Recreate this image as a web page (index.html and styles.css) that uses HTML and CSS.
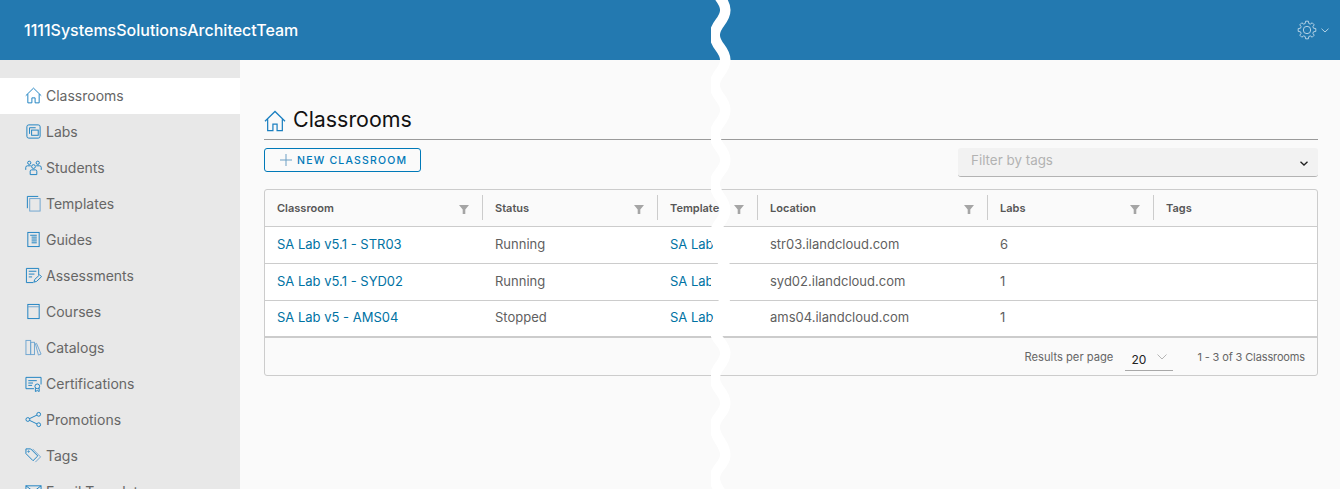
FILE: index.html
```html
<!DOCTYPE html>
<html lang="en">
<head>
<meta charset="utf-8">
<title>Classrooms</title>
<link rel="stylesheet" href="styles.css">
</head>
<body>
<header class="topbar">
  <span class="brand">1111SystemsSolutionsArchitectTeam</span>
  <div class="settings">
    <svg class="gear" viewBox="0 0 20 20" width="20" height="20"><path d="M8.6 1.2h2.8l.4 2.3 1.5.6 1.9-1.3 2 2-1.3 1.9.6 1.5 2.3.4v2.8l-2.3.4-.6 1.5 1.3 1.9-2 2-1.9-1.3-1.5.6-.4 2.3H8.6l-.4-2.3-1.5-.6-1.9 1.3-2-2 1.3-1.9-.6-1.5-2.3-.4V8.6l2.3-.4.6-1.5-1.3-1.9 2-2 1.9 1.3 1.5-.6z"/><circle cx="10" cy="10" r="3.7"/></svg>
    <svg class="caret" viewBox="0 0 8 5" width="8" height="5"><path d="M.5.7 4 4 7.5.7"/></svg>
  </div>
</header>
<div class="shell">
  <nav class="sidebar">
    <a class="nav-item active"><svg class="icon" viewBox="0 0 18 18"><path d="M.8 9.2 9 1.2l8.2 8M3 7.5v9.3h4.3v-5.3h3.4v5.3H15V7.5"/></svg>Classrooms</a>
    <a class="nav-item"><svg class="icon" viewBox="0 0 18 18"><rect x="2" y="2" width="14" height="14" rx="2"/><path d="M4.8 11.5V5h6.5"/><rect x="7" y="7.5" width="7" height="5.5"/></svg>Labs</a>
    <a class="nav-item"><svg class="icon" viewBox="0 0 18 18"><circle cx="9" cy="8" r="2"/><path d="M5.500 16.500v-3.500q0-1.500 1.500-1.500h4q1.500 0 1.500 1.500v3.500z"/><circle cx="4.500" cy="4" r="1.700"/><circle cx="13.500" cy="4" r="1.700"/><path d="M.8 11.500V9q0-1.800 1.800-1.800h3.600M17.200 11.500V9q0-1.800-1.800-1.800h-3.600"/></svg>Students</a>
    <a class="nav-item"><svg class="icon" viewBox="0 0 18 18"><path d="M2.500 14V1.500h11.500"/><rect class="soft" x="5" y="3.800" width="11" height="13.200"/></svg>Templates</a>
    <a class="nav-item"><svg class="icon" viewBox="0 0 18 18"><rect x="3" y="1.500" width="12" height="15"/><path d="M5.500 4.500h7M7 6.500h5.500M7 8.500h5.500M7 10.500h5.500M7 12.500h5.500"/></svg>Guides</a>
    <a class="nav-item"><svg class="icon" viewBox="0 0 18 18"><path d="M9 16.500H1.500v-15h13v7M4 4.500h8M4 7.500h6M4 10.500h3.500"/><path d="m9.500 16 .7-2.700 5.300-5 2 2-5.300 5z"/></svg>Assessments</a>
    <a class="nav-item"><svg class="icon" viewBox="0 0 18 18"><rect x="3" y="1.500" width="12" height="15"/><path class="soft" d="M3 4h12"/></svg>Courses</a>
    <a class="nav-item"><svg class="icon" viewBox="0 0 18 18"><rect class="soft" x="1" y="1.500" width="5" height="15"/><rect class="soft" x="6" y="3.500" width="4" height="13"/><path class="soft" d="m11 5 1.200-.4 4.800 11.400-2.800 1z"/></svg>Catalogs</a>
    <a class="nav-item"><svg class="icon" viewBox="0 0 18 18"><path d="M9.500 14.500H1v-12h16v7.500M3.500 6h9M3.500 8.500h5M3.500 11h4"/><circle cx="13" cy="12" r="2.500"/><path d="M11 14v3.500l2-1 2 1V14"/></svg>Certifications</a>
    <a class="nav-item"><svg class="icon" viewBox="0 0 18 18"><circle cx="3" cy="9" r="2"/><circle cx="14.500" cy="3.500" r="2"/><circle cx="14.500" cy="14.500" r="2"/><path d="M4.800 8.100l7.900-3.800M4.800 9.900l7.900 3.800"/></svg>Promotions</a>
    <a class="nav-item"><svg class="icon" viewBox="0 0 18 18"><path d="M1 2v5l7.500 7.500 5-5L6 2z"/><path class="soft" d="M8 2l8.500 8.500-5.500 5.500"/><circle cx="3.800" cy="4.800" r=".7"/></svg>Tags</a>
    <a class="nav-item"><svg class="icon" viewBox="0 0 18 18"><rect x="1" y="3" width="16" height="12"/><path d="m1 3 8 6 8-6"/></svg>Email Templates</a>
  </nav>
  <main class="content">
    <h1 class="page-title"><svg class="title-icon" viewBox="0 0 18 18"><path d="M.8 9.200 9 1.200l8.200 8M3 7.500v9.300h4.300v-5.300h3.400v5.300H15V7.500"/></svg>Classrooms</h1>
    <div class="toolbar">
      <button class="btn-new"><svg class="plus" viewBox="0 0 12 12" width="12" height="12"><path d="M6 0v12M0 6h12"/></svg>NEW CLASSROOM</button>
      <div class="tag-filter"><span>Filter by tags</span><svg class="filter-caret" viewBox="0 0 8 5" width="8" height="5"><path d="M.5.7 4 4 7.500.7"/></svg></div>
    </div>
    <section class="grid">
      <table>
        <colgroup><col class="c1"><col class="c2"><col class="c3"><col class="c4"><col class="c5"><col></colgroup>
        <thead>
          <tr>
            <th><span class="th-in">Classroom<svg class="funnel" viewBox="0 0 10 10"><path d="M0 1h10L6.300 5.500V10H3.700V5.500z"/></svg></span></th>
            <th><span class="th-in">Status<svg class="funnel" viewBox="0 0 10 10"><path d="M0 1h10L6.300 5.500V10H3.700V5.500z"/></svg></span></th>
            <th><span class="th-in">Template<svg class="funnel" viewBox="0 0 10 10"><path d="M0 1h10L6.300 5.500V10H3.700V5.500z"/></svg></span></th>
            <th><span class="th-in">Location<svg class="funnel" viewBox="0 0 10 10"><path d="M0 1h10L6.300 5.500V10H3.700V5.500z"/></svg></span></th>
            <th><span class="th-in">Labs<svg class="funnel" viewBox="0 0 10 10"><path d="M0 1h10L6.300 5.500V10H3.700V5.500z"/></svg></span></th>
            <th><span class="th-in">Tags</span></th>
          </tr>
        </thead>
        <tbody>
          <tr><td><a>SA Lab v5.1 - STR03</a></td><td>Running</td><td><a>SA Lab</a></td><td>str03.ilandcloud.com</td><td>6</td><td></td></tr>
          <tr><td><a>SA Lab v5.1 - SYD02</a></td><td>Running</td><td><a>SA Lab</a></td><td>syd02.ilandcloud.com</td><td>1</td><td></td></tr>
          <tr><td><a>SA Lab v5 - AMS04</a></td><td>Stopped</td><td><a>SA Lab</a></td><td>ams04.ilandcloud.com</td><td>1</td><td></td></tr>
        </tbody>
      </table>
      <footer class="grid-foot">
        <span class="per-page">Results per page</span>
        <span class="page-size"><span class="size-value">20</span><svg class="size-caret" viewBox="0 0 10 6" width="10" height="6"><path d="M.5.500 5 5 9.500.5"/></svg></span>
        <span class="count">1 - 3 of 3 Classrooms</span>
      </footer>
    </section>
  </main>
</div>
<svg class="tear" viewBox="0 0 24 489" width="24" height="489"><path d="M3.700-15C3.700-4 14.300-1 14.300 10C14.300 21 3.700 24 3.700 35C3.700 46 14.300 49 14.300 60C14.300 71 3.700 74 3.700 85C3.700 96 14.300 99 14.300 110C14.300 121 3.700 124 3.700 135C3.700 146 14.300 149 14.300 160C14.300 171 3.700 173 3.700 184C3.700 195 14.300 199 14.300 210C14.300 221 3.700 224 3.700 235C3.700 245 14.300 248 14.300 258C14.300 268 3.700 271 3.700 281C3.700 291 14.300 295 14.300 305C14.300 316 3.700 319 3.700 330C3.700 340 14.300 343 14.300 353C14.300 364 3.700 367 3.700 378C3.700 389 14.300 392 14.300 403C14.300 414 3.700 416 3.700 427C3.700 439 14.300 443 14.300 455C14.300 465 3.700 468 3.700 478C3.700 489 14.300 494 14.300 505"/></svg>
</body>
</html>
```
FILE: styles.css
```css
* { box-sizing: border-box; }
html, body { margin: 0; height: 100%; }
body {
  position: relative;
  height: 489px;
  overflow: hidden;
  font-family: "Inter", "Liberation Sans", sans-serif;
  background: #fafafa;
  color: #565656;
}
.topbar {
  height: 60px;
  background: #2379b0;
  display: flex;
  align-items: center;
  justify-content: space-between;
  padding: 0 11px 0 24px;
}
.brand { color: #fff; font-size: 16px; font-weight: 500; margin-top: -1px; }
.settings { display: flex; align-items: center; gap: 4px; }
.gear { fill: none; stroke: #b4d2e6; stroke-width: 1; }
.caret { fill: none; stroke: #b4d2e6; stroke-width: 1; }
.shell { display: flex; height: 429px; }
.sidebar {
  width: 240px;
  flex: none;
  background: #e8e8e8;
  padding-top: 18px;
  overflow: hidden;
}
.nav-item {
  display: flex;
  align-items: center;
  height: 36px;
  padding: 0 0 2px 25px;
  gap: 4px;
  font-size: 14px;
  color: #666;
}
.nav-item.active { background: #fff; }
.icon {
  width: 17px;
  height: 17px;
  flex: none;
  fill: none;
  stroke: #1a7fc0;
  stroke-width: 1;
}
.icon .soft { stroke: #6ea5d0; }
.content { flex: 1; min-width: 0; padding: 44px 22px 0 24px; }
.page-title {
  margin: 0;
  height: 36px;
  display: flex;
  align-items: center;
  gap: 7px;
  font-size: 21.400px;
  font-weight: 400;
  color: #111;
  border-bottom: 1px solid #9a9a9a;
  padding-bottom: 5px;
}
.title-icon {
  width: 22px;
  height: 22px;
  fill: none;
  stroke: #1a7fc0;
  stroke-width: 1;
  margin-top: 4px;
}
.toolbar {
  display: flex;
  align-items: flex-start;
  justify-content: space-between;
  margin-top: 8px;
}
.btn-new {
  width: 157px;
  height: 24px;
  display: flex;
  align-items: center;
  gap: 5px;
  padding: 0 0 0 15px;
  background: #fafafa;
  border: 1px solid #0079b8;
  border-radius: 3px;
  color: #0079b8;
  font: 500 10.500px "Inter", "Liberation Sans", sans-serif;
  letter-spacing: 1.200px;
}
.plus { fill: none; stroke: #6c9fc4; stroke-width: 1; }
.tag-filter {
  width: 360px;
  height: 29px;
  display: flex;
  align-items: center;
  justify-content: space-between;
  padding: 0 10px 0 13px;
  background: #f2f2f2;
  border-bottom: 1px solid #b3b3b3;
  border-radius: 3px;
  font-size: 13.400px;
  color: #b2b2b2;
}
.tag-filter span { margin-top: -4px; }
.filter-caret { fill: none; stroke: #222; stroke-width: 1.300; margin-top: 3px; }
.grid {
  margin-top: 12px;
  border: 1px solid #ccc;
  border-radius: 3px;
  background: #fafafa;
}
table { width: 100%; border-collapse: collapse; table-layout: fixed; }
.c1 { width: 218px; }
.c2 { width: 175px; }
.c3 { width: 100px; }
.c4 { width: 230px; }
.c5 { width: 166px; }
th {
  height: 36px;
  padding: 0;
  border-bottom: 1px solid #ccc;
  text-align: left;
  font-size: 11px;
  font-weight: 600;
  color: #565656;
}
.th-in {
  display: flex;
  align-items: center;
  justify-content: space-between;
  height: 25px;
  padding: 0 13px 0 12px;
  border-right: 1px solid #ccc;
}
th:last-child .th-in { border-right: 0; }
.funnel { width: 10px; height: 10px; fill: #a5a5a5; margin-top: 3px; }
td {
  height: 37px;
  padding: 0 12px 2px;
  background: #fff;
  border-bottom: 1px solid #ccc;
  font-size: 13px;
  color: #5f5f5f;
  white-space: nowrap;
  overflow: hidden;
}
tbody tr:last-child td { border-bottom: 2px solid #ccc; }
td a { color: #0072a3; }
.grid-foot {
  height: 37px;
  display: flex;
  align-items: center;
  justify-content: flex-end;
  padding-right: 12px;
  font-size: 11px;
  color: #666;
}
.per-page { font-size: 11.200px; }
.count { letter-spacing: -.13px; }
.page-size {
  width: 48px;
  height: 24px;
  margin: 4px 24px 0 12px;
  display: flex;
  align-items: center;
  justify-content: space-between;
  padding: 0 6px;
  border-bottom: 1px solid #a8a8a8;
}
.size-value { color: #222; font-size: 12px; margin-top: 2px; }
.size-caret { fill: none; stroke: #b5b5b5; stroke-width: 1; margin-top: -3px; }
.tear {
  position: absolute;
  top: 0;
  left: 711px;
  fill: none;
  stroke: #fff;
  stroke-width: 10.500;
  pointer-events: none;
}
```
